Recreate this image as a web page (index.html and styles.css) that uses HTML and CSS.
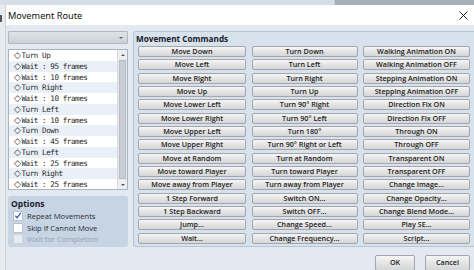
FILE: index.html
```
<!DOCTYPE html>
<html>
<head>
<meta charset="utf-8">
<link rel="stylesheet" href="styles.css">
</head>
<body>
<div class="screen">
  <div class="topstrip"><div class="ts-a"></div><div class="ts-b"></div></div>
  <div class="main">
    <div class="edge"><span class="edge-mark"></span></div>
    <div class="window">
      <div class="titlebar">
        <span class="title">Movement Route</span>
        <svg class="close" width="9" height="9" viewBox="0 0 9 9"><path d="M0.5 0.5 L8.5 8.5 M8.5 0.5 L0.5 8.5" stroke="#222" stroke-width="1"/></svg>
      </div>
      <div class="content">
        <div class="left">
          <div class="select"><span class="select-arrow"></span></div>
          <div class="list">
            <ul class="rows">
              <li><span class="dia">◇</span>Turn Up</li>
              <li><span class="dia">◇</span>Wait : 95 frames</li>
              <li><span class="dia">◇</span>Wait : 10 frames</li>
              <li><span class="dia">◇</span>Turn Right</li>
              <li><span class="dia">◇</span>Wait : 10 frames</li>
              <li><span class="dia">◇</span>Turn Left</li>
              <li><span class="dia">◇</span>Wait : 10 frames</li>
              <li><span class="dia">◇</span>Turn Down</li>
              <li><span class="dia">◇</span>Wait : 45 frames</li>
              <li><span class="dia">◇</span>Turn Left</li>
              <li><span class="dia">◇</span>Wait : 25 frames</li>
              <li><span class="dia">◇</span>Turn Right</li>
              <li><span class="dia">◇</span>Wait : 25 frames</li>
            </ul>
            <div class="scrollbar">
              <div class="sb-btn"><span class="tri-up"></span></div>
              <div class="sb-track"><div class="sb-thumb"></div></div>
              <div class="sb-btn"><span class="tri-down"></span></div>
            </div>
          </div>
          <div class="options">
            <div class="opt-title">Options</div>
            <label class="opt"><span class="box"><svg width="9" height="9" viewBox="0 0 9 9"><path d="M1.5 4.8 L3.6 7 L7.6 1.6" fill="none" stroke="#2a5fb0" stroke-width="1.4"/></svg></span>Repeat Movements</label>
            <label class="opt"><span class="box"></span>Skip If Cannot Move</label>
            <label class="opt disabled"><span class="box"></span>Wait for Completion</label>
          </div>
        </div>
        <div class="group">
          <div class="group-title">Movement Commands</div>
          <div class="grid">
            <div class="btn">Move Down</div><div class="btn">Turn Down</div><div class="btn">Walking Animation ON</div>
            <div class="btn">Move Left</div><div class="btn">Turn Left</div><div class="btn">Walking Animation OFF</div>
            <div class="btn">Move Right</div><div class="btn">Turn Right</div><div class="btn">Stepping Animation ON</div>
            <div class="btn">Move Up</div><div class="btn">Turn Up</div><div class="btn">Stepping Animation OFF</div>
            <div class="btn">Move Lower Left</div><div class="btn">Turn 90° Right</div><div class="btn">Direction Fix ON</div>
            <div class="btn">Move Lower Right</div><div class="btn">Turn 90° Left</div><div class="btn">Direction Fix OFF</div>
            <div class="btn">Move Upper Left</div><div class="btn">Turn 180°</div><div class="btn">Through ON</div>
            <div class="btn">Move Upper Right</div><div class="btn">Turn 90° Right or Left</div><div class="btn">Through OFF</div>
            <div class="btn">Move at Random</div><div class="btn">Turn at Random</div><div class="btn">Transparent ON</div>
            <div class="btn">Move toward Player</div><div class="btn">Turn toward Player</div><div class="btn">Transparent OFF</div>
            <div class="btn">Move away from Player</div><div class="btn">Turn away from Player</div><div class="btn">Change Image...</div>
            <div class="btn">1 Step Forward</div><div class="btn">Switch ON...</div><div class="btn">Change Opacity...</div>
            <div class="btn">1 Step Backward</div><div class="btn">Switch OFF...</div><div class="btn">Change Blend Mode...</div>
            <div class="btn">Jump...</div><div class="btn">Change Speed...</div><div class="btn">Play SE...</div>
            <div class="btn">Wait...</div><div class="btn">Change Frequency...</div><div class="btn">Script...</div>
          </div>
        </div>
      </div>
      <div class="footer">
        <div class="btn fbtn ok">OK</div>
        <div class="btn fbtn cancel">Cancel</div>
      </div>
    </div>
  </div>
</div>
</body>
</html>
```

FILE: styles.css
```
* { box-sizing: border-box; }
html, body { margin: 0; padding: 0; }
body { width: 474px; height: 270px; overflow: hidden; background: #dfe7f0; }
.screen { width: 474px; height: 270px; display: flex; flex-direction: column; overflow: hidden; }
.topstrip { height: 5px; display: flex; flex: none; }
.ts-a { width: 335px; background: #d6dee7; border-right: 1px solid #c5ccd4; }
.ts-b { flex: 1; background: #a9afb7; }
.main { flex: 1; display: flex; min-height: 0; }
.edge { width: 5px; flex: none; background: #e7eaee; position: relative; }
.edge-mark { position: absolute; left: 0; top: 10px; width: 2px; height: 7px; background: #555; }
.window { flex: 1; display: flex; flex-direction: column; background: #e2e9f1; border-left: 1px solid #c9d0d8; }
.titlebar { height: 20px; flex: none; background: #fff; display: flex; align-items: center; justify-content: space-between; padding: 0 6px 0 2px; }
.title { font-family: "Noto Sans", sans-serif; font-size: 9.2px; color: #111; }
.close { display: block; }
.content { display: flex; padding: 6px 0 0 2px; gap: 5px; height: 222px; flex: none; }
.left { width: 120px; flex: none; display: flex; flex-direction: column; }
.select { height: 13px; flex: none; background: linear-gradient(#dfe2e6, #cdd1d6); border: 1px solid #b3b9c1; border-radius: 1px; position: relative; }
.select-arrow { position: absolute; right: 4px; top: 5px; border-left: 2px solid transparent; border-right: 2px solid transparent; border-top: 2px solid #666; }
.list { margin-top: 5px; height: 141px; flex: none; display: flex; border: 1px solid #a9b4c2; background: #fff; }
.rows { list-style: none; margin: 0; padding: 0; flex: 1; min-width: 0; }
.rows li { height: 10.75px; line-height: 10.75px; font-family: "DejaVu Sans Mono", monospace; font-size: 7.6px; letter-spacing: -0.45px; color: #2a2a2a; padding-left: 5px; white-space: nowrap; overflow: hidden; }
.dia { font-family: "DejaVu Sans", sans-serif; font-size: 9px; letter-spacing: 0; margin-right: 0.5px; color: #333; }
.rows li:nth-child(even) { background: #eaf0f7; }
.scrollbar { width: 10px; flex: none; display: flex; flex-direction: column; background: #e6e9ed; border-left: 1px solid #d5dae0; }
.sb-btn { height: 9px; display: flex; align-items: center; justify-content: center; background: #eceef1; }
.sb-track { flex: 1; padding: 1px 1px; }
.sb-thumb { height: 100%; background: #c9cdd3; border: 1px solid #b9bec5; }
.tri-up { border-left: 2px solid transparent; border-right: 2px solid transparent; border-bottom: 2px solid #555; }
.tri-down { border-left: 2px solid transparent; border-right: 2px solid transparent; border-top: 2px solid #555; }
.options { margin-top: 6px; height: 51px; flex: none; background: #c7d4e3; border-radius: 3px; padding: 2px 3px; display: flex; flex-direction: column; }
.opt-title { font-family: "Open Sans", sans-serif; font-weight: 700; font-size: 8.5px; color: #1a1a2a; height: 12px; line-height: 12px; }
.opt { display: flex; align-items: center; height: 12px; font-family: "Open Sans", sans-serif; font-size: 7.6px; color: #2a2a35; padding-left: 2px; }
.opt.disabled { color: #98a2ae; }
.box { width: 10px; height: 10px; background: #fff; border: 1px solid #b8c2cd; margin-right: 4px; display: flex; align-items: center; justify-content: center; flex: none; }
.opt.disabled .box { background: #e6ebf1; border-color: #cbd3dc; }
.box svg { display: block; }
.group { flex: 1; background: #d8e2ec; border: 1px solid #b9c5d2; border-right: none; border-radius: 3px 0 0 3px; padding: 1px 0 0 4px; display: flex; flex-direction: column; }
.group-title { font-family: "Open Sans", sans-serif; font-weight: 700; font-size: 8.2px; color: #1a1a2a; height: 12px; line-height: 12px; margin-left: -2px; }
.grid { display: grid; grid-template-columns: 108px 106px 107px; grid-template-rows: repeat(15, 11px); column-gap: 5.5px; row-gap: 2.35px; margin-top: 1px; }
.btn { background: linear-gradient(#f6f6f6, #e4e4e4 50%, #d5d6d8); border: 1px solid #a3a7ad; border-radius: 2px; font-family: "Open Sans", sans-serif; font-weight: 600; font-size: 7.2px; color: #222; display: flex; align-items: center; justify-content: center; white-space: nowrap; line-height: 1; }
.footer { display: flex; gap: 10px; padding: 8px 0 0 369px; }
.fbtn { height: 16px; flex: none; }
.ok { width: 40px; }
.cancel { width: 45px; }
```
